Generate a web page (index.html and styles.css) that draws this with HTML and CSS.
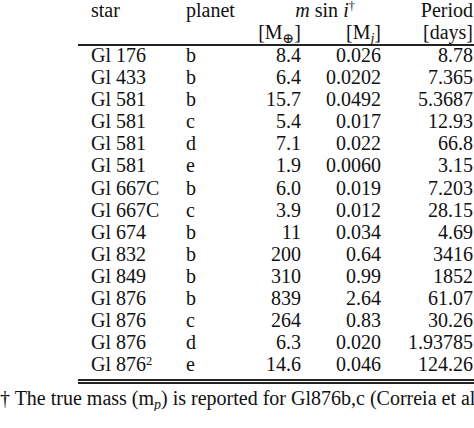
FILE: index.html
```html
<!DOCTYPE html>
<html>
<head>
<meta charset="utf-8">
<link rel="stylesheet" href="styles.css">
</head>
<body>
<div class="page">
  <div class="tablewrap">
    <table class="data">
      <colgroup>
        <col class="w1"><col class="w2"><col class="w3"><col class="w4"><col class="w5"><col class="w6">
      </colgroup>
      <thead>
        <tr class="hr1">
          <th class="c1">star</th>
          <th class="c2">planet</th>
          <th class="span" colspan="2"><i>m</i> sin <i>i</i><span class="sup">†</span></th>
          <th class="c5">Period</th>
          <th></th>
        </tr>
        <tr class="hr2">
          <th class="c1"></th>
          <th class="c2"></th>
          <th class="c3">[M<span class="sub">⊕</span>]</th>
          <th class="c4">[M<span class="sub"><i>j</i></span>]</th>
          <th class="c5">[days]</th>
          <th></th>
        </tr>
      </thead>
      <tbody>
        <tr><td class="c1">Gl 176</td><td class="c2">b</td><td class="c3">8.4</td><td class="c4">0.026</td><td class="c5">8.78</td><td></td></tr>
        <tr><td class="c1">Gl 433</td><td class="c2">b</td><td class="c3">6.4</td><td class="c4">0.0202</td><td class="c5">7.365</td><td></td></tr>
        <tr><td class="c1">Gl 581</td><td class="c2">b</td><td class="c3">15.7</td><td class="c4">0.0492</td><td class="c5">5.3687</td><td></td></tr>
        <tr><td class="c1">Gl 581</td><td class="c2">c</td><td class="c3">5.4</td><td class="c4">0.017</td><td class="c5">12.93</td><td></td></tr>
        <tr><td class="c1">Gl 581</td><td class="c2">d</td><td class="c3">7.1</td><td class="c4">0.022</td><td class="c5">66.8</td><td></td></tr>
        <tr><td class="c1">Gl 581</td><td class="c2">e</td><td class="c3">1.9</td><td class="c4">0.0060</td><td class="c5">3.15</td><td></td></tr>
        <tr><td class="c1">Gl 667C</td><td class="c2">b</td><td class="c3">6.0</td><td class="c4">0.019</td><td class="c5">7.203</td><td></td></tr>
        <tr><td class="c1">Gl 667C</td><td class="c2">c</td><td class="c3">3.9</td><td class="c4">0.012</td><td class="c5">28.15</td><td></td></tr>
        <tr><td class="c1">Gl 674</td><td class="c2">b</td><td class="c3">11</td><td class="c4">0.034</td><td class="c5">4.69</td><td></td></tr>
        <tr><td class="c1">Gl 832</td><td class="c2">b</td><td class="c3">200</td><td class="c4">0.64</td><td class="c5">3416</td><td></td></tr>
        <tr><td class="c1">Gl 849</td><td class="c2">b</td><td class="c3">310</td><td class="c4">0.99</td><td class="c5">1852</td><td></td></tr>
        <tr><td class="c1">Gl 876</td><td class="c2">b</td><td class="c3">839</td><td class="c4">2.64</td><td class="c5">61.07</td><td></td></tr>
        <tr><td class="c1">Gl 876</td><td class="c2">c</td><td class="c3">264</td><td class="c4">0.83</td><td class="c5">30.26</td><td></td></tr>
        <tr><td class="c1">Gl 876</td><td class="c2">d</td><td class="c3">6.3</td><td class="c4">0.020</td><td class="c5">1.93785</td><td></td></tr>
        <tr><td class="c1">Gl 876<span class="sup2">2</span></td><td class="c2">e</td><td class="c3">14.6</td><td class="c4">0.046</td><td class="c5">124.26</td><td></td></tr>
      </tbody>
    </table>
    <div class="dblrule"></div>
  </div>
  <p class="note">† The true mass (m<span class="notesub"><i>p</i></span>) is reported for Gl876b,c (Correia et al</p>
</div>
</body>
</html>
```

FILE: styles.css
```css
html, body {
  margin: 0;
  padding: 0;
  background: #ffffff;
}

body {
  font-family: "Liberation Serif", "DejaVu Serif", serif;
  font-size: 20px;
  color: #111111;
  width: 474px;
  height: 428px;
  overflow: hidden;
}

.page {
  width: 474px;
  overflow: hidden;
}

.tablewrap {
  width: 474px;
  overflow: hidden;
}

.data {
  margin-left: 78px;
  border-collapse: separate;
  border-spacing: 0;
  table-layout: fixed;
  width: 415px;
}

.w1 { width: 108px; }
.w2 { width: 60px; }
.w3 { width: 55px; }
.w4 { width: 80px; }
.w5 { width: 92px; }
.w6 { width: 20px; }

.data th, .data td {
  padding: 0;
  font-weight: normal;
  white-space: nowrap;
}

.c1 { text-align: left; padding-left: 13px !important; }
.c2 { text-align: left; }
.c3, .c4, .c5 { text-align: right; }

.span {
  text-align: center;
  padding-left: 23px !important;
}

.hr1 th {
  line-height: 21.5px;
  height: 21.5px;
}

.hr2 th {
  line-height: 21.5px;
  height: 21.5px;
  padding-bottom: 1px;
  border-bottom: 2px solid #222222;
}

.data td {
  line-height: 18px;
  height: 18px;
  padding-bottom: 4.1px;
}

.sup {
  font-size: 0.6em;
  line-height: 0;
  vertical-align: 0.6em;
}

.sup2 {
  font-size: 0.62em;
  line-height: 0;
  vertical-align: 0.5em;
}

.sub {
  font-size: 0.7em;
  line-height: 0;
  vertical-align: -0.25em;
}

.notesub {
  font-size: 0.7em;
  line-height: 1;
  vertical-align: -0.25em;
}

.dblrule {
  margin-left: 78px;
  margin-top: 1.5px;
  height: 1.5px;
  border-top: 2px solid #222222;
  border-bottom: 2px solid #222222;
}

.note {
  margin: 3px 0 0 0;
  line-height: 22px;
  height: 24px;
  white-space: nowrap;
  overflow: hidden;
}
```
